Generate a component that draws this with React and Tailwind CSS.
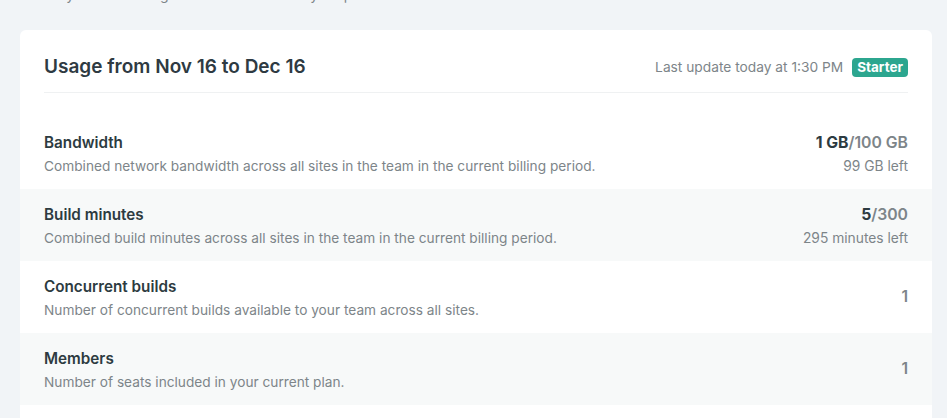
const rows = [
  {
    title: "Bandwidth",
    description:
      "Combined network bandwidth across all sites in the team in the current billing period.",
    used: "1 GB",
    total: "/100 GB",
    left: "99 GB left",
  },
  {
    title: "Build minutes",
    description:
      "Combined build minutes across all sites in the team in the current billing period.",
    used: "5",
    total: "/300",
    left: "295 minutes left",
  },
  {
    title: "Concurrent builds",
    description: "Number of concurrent builds available to your team across all sites.",
    value: "1",
  },
  {
    title: "Members",
    description: "Number of seats included in your current plan.",
    value: "1",
  },
];

export default function App() {
  return (
    <div className="min-h-screen bg-[#f1f4f7] font-['Inter',sans-serif] overflow-hidden">
      <div className="h-[30px] overflow-hidden px-5">
        <p className="-mt-[15px] text-[14px] text-[#7d8589] leading-[20px]">
          Check your team usage and the features of your plan.
        </p>
      </div>
      <div className="mx-5 w-[912px] rounded-md bg-white pb-6">
        <div className="mx-6 flex items-center justify-between border-b border-[#eff1f2] pt-6 pb-3">
          <h2 className="text-[19px] leading-[26px] font-semibold text-[#2e3a42]">
            Usage from Nov 16 to Dec 16
          </h2>
          <div className="flex items-center gap-[9px] pt-[1px]">
            <span className="text-[13.75px] text-[#7d8589]">Last update today at 1:30 PM</span>
            <span className="rounded-[4px] bg-[#2ca68f] px-[5px] text-[13.5px] leading-[19px] font-bold text-white">
              Starter
            </span>
          </div>
        </div>
        <div className="mt-6">
          {rows.map((row, i) => (
            <div
              key={row.title}
              className={`flex h-[72px] items-center justify-between px-6 ${
                i % 2 === 1 ? "bg-[#f7f9f9]" : "bg-white"
              }`}
            >
              <div className="pt-[1px]">
                <div className="text-[15.25px] leading-[22px] font-semibold text-[#2d3b41]">
                  {row.title}
                </div>
                <div className="mt-[2px] text-[13.7px] leading-[20px] text-[#7d8589]">
                  {row.description}
                </div>
              </div>
              {row.value ? (
                <div className="text-[15.5px] font-semibold text-[#7d8589]">{row.value}</div>
              ) : (
                <div className="pt-[1px] text-right">
                  <div className="text-[15.75px] leading-[22px] font-semibold">
                    <span className="font-bold text-[#2d3b41]">{row.used}</span>
                    <span className="text-[#7d8589]">{row.total}</span>
                  </div>
                  <div className="mt-[2px] text-[13.8px] leading-[20px] text-[#7d8589]">
                    {row.left}
                  </div>
                </div>
              )}
            </div>
          ))}
        </div>
      </div>
    </div>
  );
}
